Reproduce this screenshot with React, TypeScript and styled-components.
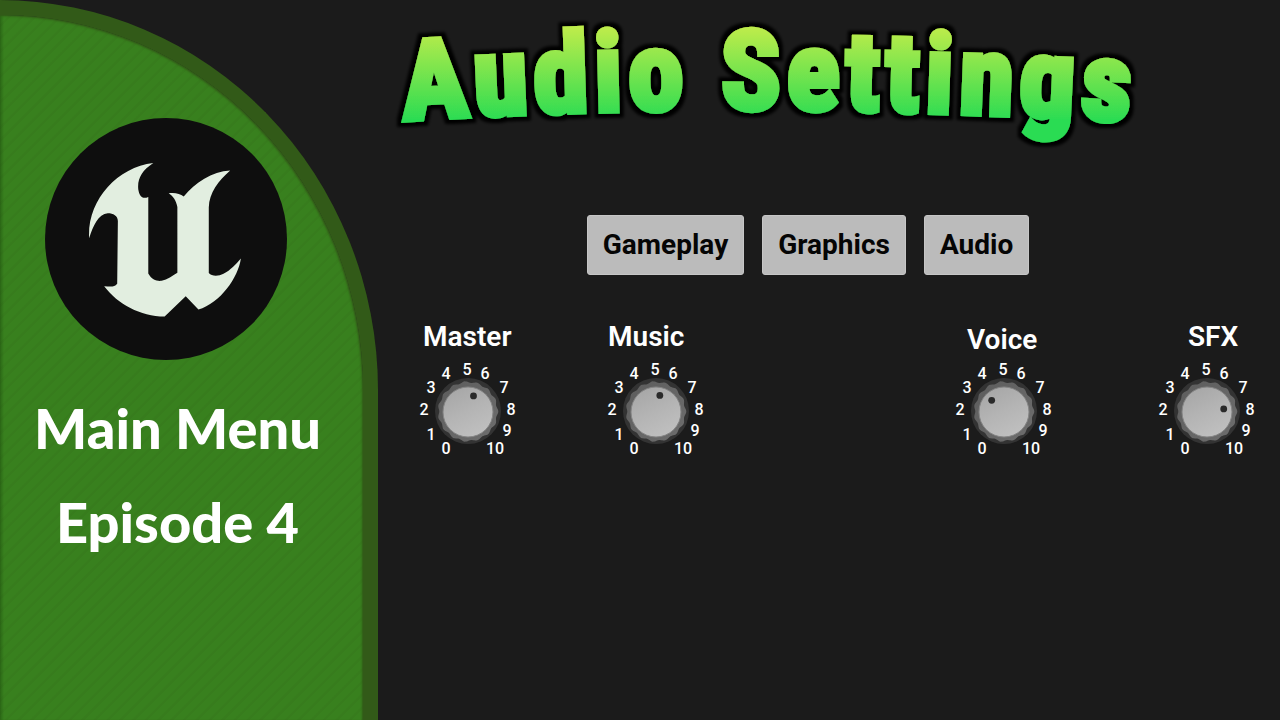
import React, { useId, useState } from "react";
import styled, { createGlobalStyle } from "styled-components";

const GlobalStyle = createGlobalStyle`
  *, *::before, *::after { box-sizing: border-box; }
  body { margin: 0; background: #1b1b1b; color: #fff; font-family: Roboto, "Liberation Sans", sans-serif; }
`;

const Page = styled.div`
  display: flex;
  min-height: 100vh;
  background: #1b1b1b;
`;

const Sidebar = styled.aside`
  flex: 0 0 378px;
  display: flex;
  flex-direction: column;
  align-items: center;
  padding: 103px 8px 32px 0;
  border: solid #325a18;
  border-width: 15px 15px 0 0;
  border-top-right-radius: 378px 390px;
  background:
    linear-gradient(90deg, rgba(30, 80, 14, 0.5), transparent 4px),
    repeating-linear-gradient(135deg, #38801e 0 6px, #377c1d 7px 9px);
  background-clip: padding-box;
  box-shadow: inset -1px 1px 2px #325a18;
`;

const Logo = styled.svg`
  display: block;
  width: 242px;
  height: 242px;
  margin: 0 23px 21px 0;
`;

const SeriesTitle = styled.p`
  margin: 0;
  font: 900 56px/94px Lato, "Open Sans", sans-serif;
  text-align: center;
  white-space: nowrap;
`;

const Main = styled.main`
  flex: 1;
  min-width: 0;
`;

const Heading = styled.h1`
  margin: 0 0 75px;
  padding: 0 8px;
`;

const ArchedTitle = styled.svg`
  display: block;
  width: 100%;
  max-width: 760px;
  overflow: visible;
`;

const ArchedText = styled.text`
  font: 700 110px "Liberation Sans Narrow", "Roboto Condensed", Roboto, sans-serif;
  letter-spacing: 6px;
  stroke-linejoin: miter;
  stroke-miterlimit: 2;
`;

const Tabs = styled.nav`
  display: flex;
  justify-content: center;
  gap: 18px;
  padding-right: 42px;
`;

const TabButton = styled.button`
  height: 60px;
  padding: 0 15px;
  border: 1px solid #c6c6c6;
  border-radius: 3px;
  background: #bbb;
  color: #050505;
  font: 700 28px/32px Roboto, "Liberation Sans", sans-serif;
  cursor: pointer;
`;

const Channels = styled.section`
  display: grid;
  grid-template-columns: 188fr 348fr 203fr 108fr;
  align-items: end;
  margin-top: 46px;
  padding: 0 19px 32px 36px;
`;

const Channel = styled.div`
  width: 108px;
`;

const ChannelLabel = styled.label<{ $lead: number; $gap: number }>`
  display: block;
  padding: 0 0 ${(p) => p.$gap}px ${(p) => p.$lead}px;
  font-weight: 600;
  font-size: 28px;
  line-height: 32px;
`;

const Dial = styled.div`
  position: relative;
  height: 108px;
`;

const DialFace = styled.svg`
  display: block;
  width: 108px;
  height: 108px;
`;

const DialNumber = styled.text`
  fill: #fff;
  font: 500 16px Roboto, "Liberation Sans", sans-serif;
  text-anchor: middle;
`;

const DialInput = styled.input`
  position: absolute;
  inset: 20px;
  width: 68px;
  height: 68px;
  margin: 0;
  opacity: 0;
  cursor: grab;
`;

const MARKS = [
  [32, 90], [17, 76], [10, 51], [17, 29], [32, 15], [53, 11],
  [71, 15], [90, 29], [97, 51], [93, 72], [81, 90],
];

const scallops = (() => {
  const points: string[] = [];
  for (let i = 0; i < 180; i++) {
    const a = (i / 180) * Math.PI * 2;
    const r = 29.5 + Math.cos(a * 15) * 0.8;
    points.push(`${(54 + r * Math.cos(a)).toFixed(2)},${(53.5 + r * Math.sin(a)).toFixed(2)}`);
  }
  return points.join(" ");
})();

type KnobProps = { label: string; initial: number; lead: number; gap?: number };

function Knob({ label, initial, lead, gap = 5 }: KnobProps) {
  const id = useId();
  const [value, setValue] = useState(initial);
  const angle = ((value * 29 - 145) * Math.PI) / 180;
  return (
    <Channel>
      <ChannelLabel htmlFor={id} $lead={lead} $gap={gap}>{label}</ChannelLabel>
      <Dial>
        <DialFace viewBox="0 0 108 108" aria-hidden="true">
          <defs>
            <linearGradient id={`${id}-face`} x1="0.2" y1="0" x2="0.7" y2="1">
              <stop offset="0" stopColor="#a6a6a6" />
              <stop offset="0.5" stopColor="#b4b4b4" />
              <stop offset="1" stopColor="#c0c0c0" />
            </linearGradient>
            <linearGradient id={`${id}-rim`} x1="0" y1="0" x2="1" y2="1">
              <stop offset="0" stopColor="#5c5c5c" />
              <stop offset="1" stopColor="#6e6e6e" />
            </linearGradient>
          </defs>
          <circle cx="54" cy="53" r="33" fill="#333" />
          <polygon points={scallops} fill={`url(#${id}-rim)`} />
          <circle cx="54" cy="54" r="25" fill={`url(#${id}-face)`} stroke="#858585" strokeWidth="1" />
          <circle cx={54 + 17 * Math.sin(angle)} cy={54 - 17 * Math.cos(angle)} r="3.4" fill="#2a2a2a" />
          {MARKS.map(([x, y], n) => (
            <DialNumber key={n} x={x} y={y + 6}>{n}</DialNumber>
          ))}
        </DialFace>
        <DialInput
          id={id}
          type="range"
          min={0}
          max={10}
          step={0.05}
          value={value}
          onChange={(e) => setValue(Number(e.target.value))}
        />
      </Dial>
    </Channel>
  );
}

export default function App() {
  return (
    <>
      <GlobalStyle />
      <Page>
        <Sidebar>
          <Logo viewBox="46 22 724 724" role="img" aria-label="Unreal Engine">
            <circle cx="408" cy="384" r="362" fill="#0e0e0e" />
            <path
              fill="#e2eee0"
              d="M370 157C335 180 322 205 325 235C328 255 337 266 355 258L355 487C365 505 380 511 395 509C412 505 428 494 442 485L442 288C438 268 430 256 416 247C434 244 450 248 461 257C495 215 545 182 600 179C565 210 537 245 536 290L536 486C545 496 565 496 580 488C602 476 616 460 632 442C624 500 570 575 505 595L467 555L404 616C330 614 265 580 223 525C240 526 252 530 262 518L264 330C264 315 250 307 234 307C205 310 190 345 178 382C172 270 260 170 370 157Z"
            />
          </Logo>
          <SeriesTitle>Main Menu</SeriesTitle>
          <SeriesTitle>Episode 4</SeriesTitle>
        </Sidebar>
        <Main>
          <Heading>
            <ArchedTitle viewBox="0 0 760 140">
              <defs>
                <path id="title-arc" d="M18 120Q380 96 800 125" />
                <linearGradient id="title-fill" gradientUnits="userSpaceOnUse" x1="0" y1="28" x2="0" y2="120">
                  <stop offset="0" stopColor="#bdec4b" />
                  <stop offset="1" stopColor="#2bdc52" />
                </linearGradient>
                <filter id="title-outline" x="-5%" y="-20%" width="110%" height="140%">
                  <feMorphology in="SourceAlpha" operator="dilate" radius="4" result="grown" />
                  <feGaussianBlur in="grown" stdDeviation="1.5" result="edge" />
                  <feFlood floodColor="#000" />
                  <feComposite in2="edge" operator="in" result="outline" />
                  <feMerge>
                    <feMergeNode in="outline" />
                    <feMergeNode in="SourceGraphic" />
                  </feMerge>
                </filter>
              </defs>
              <ArchedText
                fill="url(#title-fill)"
                stroke="url(#title-fill)"
                strokeWidth="6"
                filter="url(#title-outline)"
              >
                <textPath href="#title-arc">Audio Settings</textPath>
              </ArchedText>
            </ArchedTitle>
          </Heading>
          <Tabs aria-label="Settings sections">
            <TabButton type="button">Gameplay</TabButton>
            <TabButton type="button">Graphics</TabButton>
            <TabButton type="button">Audio</TabButton>
          </Tabs>
          <Channels>
            <Knob label="Master" initial={5.65} lead={9} />
            <Knob label="Music" initial={5.45} lead={6} />
            <Knob label="Voice" initial={3.4} lead={17} gap={2} />
            <Knob label="SFX" initial={7.75} lead={35} />
          </Channels>
        </Main>
      </Page>
    </>
  );
}
